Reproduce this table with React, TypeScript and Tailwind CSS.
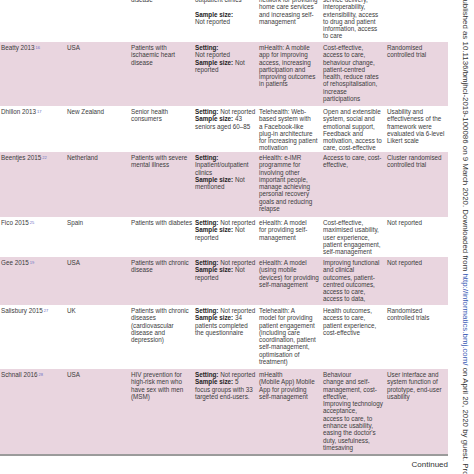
import React from "react"

type Row = {
  author?: string
  refNo?: string
  country?: string
  pop: string[]
  setting: string[]
  model: string[]
  outcome: string[]
  design: string[]
  h: string
  shade?: boolean
}

const rows: Row[] = [
  {
    pop: ["disease"],
    setting: ["outpatient clinics", "", "Sample size:", "Not reported"],
    model: ["network for providing", "home care services", "and increasing self-", "management"],
    outcome: [
      "service delivery,",
      "interoperability,",
      "extensibility, access",
      "to drug and patient",
      "information, access",
      "to care",
    ],
    design: [],
    h: "h-[48px]",
  },
  {
    author: "Beatty 2013",
    refNo: "16",
    country: "USA",
    pop: ["Patients with", "ischaemic heart", "disease"],
    setting: ["Setting:", "Not reported", "Sample size: Not", "reported"],
    model: [
      "mHealth: A mobile",
      "app for improving",
      "access, increasing",
      "participation and",
      "improving outcomes",
      "in patients",
    ],
    outcome: [
      "Cost-effective,",
      "access to care,",
      "behaviour change,",
      "patient-centred",
      "health, reduce rates",
      "of rehospitalisation,",
      "increase",
      "participations",
    ],
    design: ["Randomised", "controlled trial"],
    h: "h-[64px]",
    shade: true,
  },
  {
    author: "Dhillon 2013",
    refNo: "17",
    country: "New Zealand",
    pop: ["Senior health", "consumers"],
    setting: ["Setting: Not reported", "Sample size: 43", "seniors aged 60–85"],
    model: [
      "Telehealth: Web-",
      "based system with",
      "a Facebook-like",
      "plug-in architecture",
      "for increasing patient",
      "motivation",
    ],
    outcome: [
      "Open and extensible",
      "system, social and",
      "emotional support,",
      "Feedback and",
      "motivation, access to",
      "care, cost-effective",
    ],
    design: [
      "Usability and",
      "effectiveness of the",
      "framework were",
      "evaluated via 6-level",
      "Likert scale",
    ],
    h: "h-[46px]",
  },
  {
    author: "Beentjes 2015",
    refNo: "22",
    country: "Netherland",
    pop: ["Patients with severe", "mental illness"],
    setting: ["Setting:", "Inpatient/outpatient", "clinics", "Sample size: Not", "mentioned"],
    model: [
      "eHealth: e-IMR",
      "programme for",
      "involving other",
      "important people,",
      "manage achieving",
      "personal recovery",
      "goals and reducing",
      "relapse",
    ],
    outcome: ["Access to care, cost-", "effective,"],
    design: ["Cluster randomised", "controlled trial"],
    h: "h-[65px]",
    shade: true,
  },
  {
    author: "Fico 2015",
    refNo: "25",
    country: "Spain",
    pop: ["Patients with diabetes"],
    setting: ["Setting: Not reported", "Sample size: Not", "reported"],
    model: ["eHealth: A model", "for providing self-", "management"],
    outcome: [
      "Cost-effective,",
      "maximised usability,",
      "user experience,",
      "patient engagement,",
      "self-management",
    ],
    design: ["Not reported"],
    h: "h-[40px]",
  },
  {
    author: "Gee 2015",
    refNo: "19",
    country: "USA",
    pop: ["Patients with chronic", "disease"],
    setting: ["Setting: Not reported", "Sample size: Not", "reported"],
    model: ["eHealth: A model", "(using mobile", "devices) for providing", "self-management"],
    outcome: [
      "Improving functional",
      "and clinical",
      "outcomes, patient-",
      "centred outcomes,",
      "access to care,",
      "access to data,",
    ],
    design: ["Not reported"],
    h: "h-[48px]",
    shade: true,
  },
  {
    author: "Salisbury 2015",
    refNo: "27",
    country: "UK",
    pop: ["Patients with chronic", "diseases", "(cardiovascular", "disease and", "depression)"],
    setting: ["Setting: Not reported", "Sample size: 34", "patients completed", "the questionnaire"],
    model: [
      "Telehealth: A",
      "model for providing",
      "patient engagement",
      "(including care",
      "coordination, patient",
      "self-management,",
      "optimisation of",
      "treatment)",
    ],
    outcome: ["Health outcomes,", "access to care,", "patient experience,", "cost-effective"],
    design: ["Randomised", "controlled trials"],
    h: "h-[64px]",
  },
  {
    author: "Schnall 2016",
    refNo: "28",
    country: "USA",
    pop: ["HIV prevention for", "high-risk men who", "have sex with men", "(MSM)"],
    setting: ["Setting: Not reported", "Sample size: 5", "focus groups with 33", "targeted end-users."],
    model: ["mHealth", "(Mobile App) Mobile", "App for providing", "self-management"],
    outcome: [
      "Behaviour",
      "change and self-",
      "management, cost-",
      "effective,",
      "Improving technology",
      "acceptance,",
      "access to care, to",
      "enhance usability,",
      "easing the doctor's",
      "duty, usefulness,",
      "timesaving",
    ],
    design: ["User interface and", "system function of", "prototype, end-user", "usability"],
    h: "h-[85px]",
    shade: true,
  },
]

function Line({ text }: { text: string }) {
  const m = text.match(/^(Setting:|Sample size:)(.*)$/)
  if (!text) return <div className="whitespace-nowrap">&nbsp;</div>
  if (m) {
    return (
      <div className="whitespace-nowrap">
        <span className="font-bold text-[#222]">{m[1]}</span>
        {m[2]}
      </div>
    )
  }
  return <div className="whitespace-nowrap">{text}</div>
}

function Cell({ lines }: { lines: string[] }) {
  return (
    <div className="pl-[1px] pt-[2px]">
      {lines.map((l, i) => (
        <Line key={i} text={l} />
      ))}
    </div>
  )
}

export default function App() {
  return (
    <div className="w-[474px] h-[474px] overflow-hidden bg-white flex font-['Liberation_Sans',Arial,sans-serif]">
      {/* table */}
      <div className="w-[448px] shrink-0 flex flex-col -mt-[6px]">
        <div className="text-[6.3px] leading-[7.3px] text-[#3c3c3c]">
          {rows.map((r, idx) => (
            <div
              key={idx}
              className={`grid grid-cols-[66px_64px_64px_64px_64px_64px_62px] overflow-hidden ${r.h} ${
                r.shade ? "bg-[#e9d5df]" : "bg-white"
              }`}
            >
              <div className="pl-[1px] pt-[2px] whitespace-nowrap">
                {r.author}
                {r.refNo && (
                  <sup className="text-[4px] text-[#6b6fc4] relative -top-[1px] ml-[1px]">{r.refNo}</sup>
                )}
              </div>
              <div className="pl-[1px] pt-[2px] whitespace-nowrap">{r.country}</div>
              <Cell lines={r.pop} />
              <Cell lines={r.setting} />
              <Cell lines={r.model} />
              <Cell lines={r.outcome} />
              <Cell lines={r.design} />
            </div>
          ))}
        </div>
        <div className="h-[2px] bg-[#9b9b9b]" />
        <div className="text-right text-[8px] leading-[10px] text-[#333] pt-[4px]">Continued</div>
      </div>

      {/* side strip */}
      <div className="flex-1 pl-[13px] overflow-hidden">
        <div className="[writing-mode:vertical-rl] whitespace-nowrap text-[7.9px] leading-[9px] text-[#333] -mt-[5px]">
          published as 10.1136/bmjhci-2019-100086 on 9 March 2020. Downloaded from{" "}
          <span className="text-[#3b5bb5]">http://informatics.bmj.com/</span> on April 20, 2020 by guest. Protected
          by copyright.
        </div>
      </div>
    </div>
  )
}
